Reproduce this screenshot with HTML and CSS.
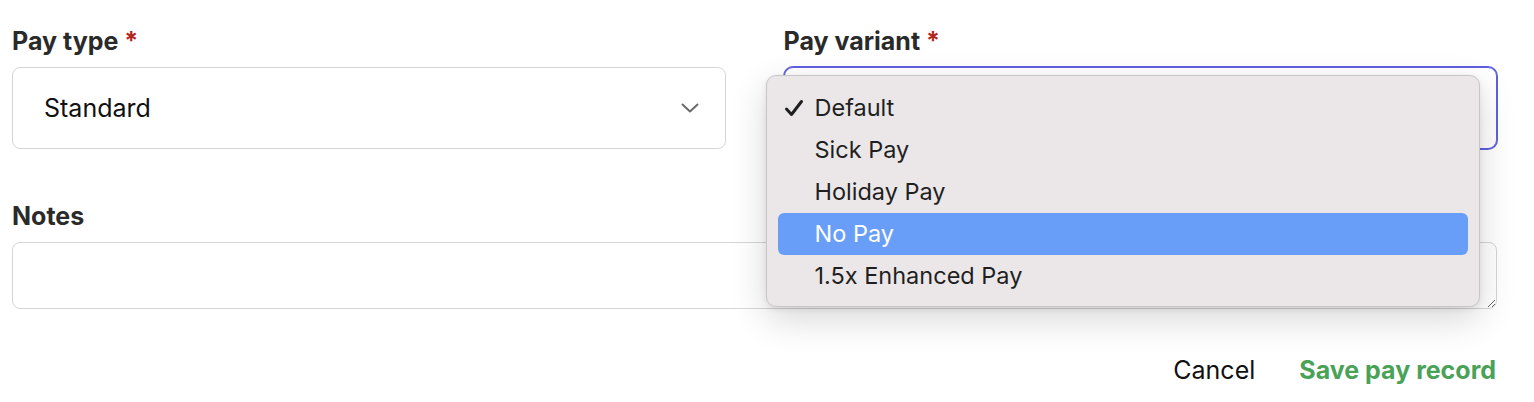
FILE: index.html
```html
<!DOCTYPE html>
<html lang="en">
<head>
<meta charset="utf-8">
<title>Pay record</title>
<link rel="stylesheet" href="styles.css">
</head>
<body>
<form class="form">
  <div class="row two">
    <div class="field">
      <label class="label">Pay type <span class="req">*</span></label>
      <div class="select">
        <span class="value">Standard</span>
        <svg class="chev" width="18" height="10" viewBox="0 0 18 10"><polyline points="1.5,1.5 9,8.5 16.5,1.5" fill="none" stroke="#6b6b6b" stroke-width="2" stroke-linecap="round" stroke-linejoin="round"/></svg>
      </div>
    </div>
    <div class="field">
      <label class="label">Pay variant <span class="req">*</span></label>
      <div class="select-wrap">
        <div class="select focused"></div>
        <ul class="menu">
          <li class="opt checked"><svg class="check" width="20" height="18" viewBox="0 0 20 18"><polyline points="2.5,10 7.5,15.5 17.5,2.5" fill="none" stroke="#1f1f1f" stroke-width="3" stroke-linecap="round" stroke-linejoin="round"/></svg>Default</li>
          <li class="opt">Sick Pay</li>
          <li class="opt">Holiday Pay</li>
          <li class="opt active">No Pay</li>
          <li class="opt">1.5x Enhanced Pay</li>
        </ul>
      </div>
    </div>
  </div>
  <div class="row">
    <div class="field">
      <label class="label">Notes</label>
      <textarea class="notes"></textarea>
    </div>
  </div>
  <div class="actions">
    <button type="button" class="btn cancel">Cancel</button>
    <button type="button" class="btn save">Save pay record</button>
  </div>
</form>
</body>
</html>
```
FILE: styles.css
```css
* { box-sizing: border-box; }
html, body { margin: 0; background: #fff; }
body {
  font-family: Inter, "Noto Sans", "Liberation Sans", sans-serif;
  color: #222;
}
.form {
  padding: 26px 37px 0 12px;
  display: flex;
  flex-direction: column;
}
.row.two {
  display: grid;
  grid-template-columns: 1fr 1fr;
  column-gap: 58px;
}
.row + .row { margin-top: 52px; }
.field { display: flex; flex-direction: column; }
.label {
  font-size: 25px;
  line-height: 30px;
  font-weight: 700;
  color: #2a2a2a;
  margin-bottom: 11px;
}
.req { color: #b3261e; }
.select {
  height: 82px;
  border: 1px solid #d6d6d6;
  border-radius: 8px;
  background: #fff;
  display: flex;
  align-items: center;
  padding: 0 26px 0 31px;
}
.select .value {
  flex: 1;
  font-size: 25px;
  color: #111;
}
.select.focused {
  border: 1px solid #5f60e0;
  box-shadow: 0 0 0 1px #5f60e0;
  border-radius: 9px;
}
.select-wrap { position: relative; }
.menu {
  position: absolute;
  top: 8px;
  left: -18px;
  right: 17px;
  margin: 0;
  list-style: none;
  padding: 11px 11px 9px;
  background: #ebe7e8;
  border: 1px solid #c9c6c6;
  border-radius: 10px;
  box-shadow: 0 12px 36px rgba(0,0,0,0.16), 0 2px 6px rgba(0,0,0,0.08);
  z-index: 2;
}
.opt {
  position: relative;
  height: 42px;
  line-height: 42px;
  padding-left: 37px;
  font-size: 23.5px;
  color: #1f1f1f;
  border-radius: 6px;
}
.opt.active { background: #699ef8; color: #fff; }
.check { position: absolute; left: 6px; top: 12px; }
.notes {
  display: block;
  width: 100%;
  height: 67px;
  border: 1px solid #d6d6d6;
  border-radius: 8px;
  font: inherit;
  resize: vertical;
  margin: 0;
}
.actions {
  display: flex;
  justify-content: flex-end;
  gap: 44px;
  margin-top: 46px;
  margin-right: 1px;
}
.btn {
  background: none;
  border: 0;
  padding: 0;
  font-family: inherit;
  font-size: 25px;
  line-height: 30px;
  cursor: pointer;
}
.cancel { color: #111; }
.save { color: #4aa257; font-weight: 700; }
```
